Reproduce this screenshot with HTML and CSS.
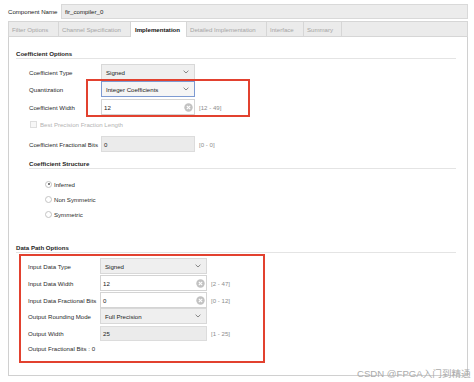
FILE: index.html
```html
<!DOCTYPE html>
<html>
<head>
<meta charset="utf-8">
<link rel="stylesheet" href="styles.css">
</head>
<body>
<div class="top">
  <span class="top-label">Component Name</span>
  <div class="top-input">fir_compiler_0</div>
</div>
<div class="tabs">
  <div class="tab w1">Filter Options</div>
  <div class="tab w2">Channel Specification</div>
  <div class="tab w3 active">Implementation</div>
  <div class="tab w4">Detailed Implementation</div>
  <div class="tab w5">Interface</div>
  <div class="tab w6">Summary</div>
</div>
<div class="panel">
  <div class="heading h-main">Coefficient Options</div>
  <div class="group g1">
    <div class="row r1">
      <span class="label">Coefficient Type</span>
      <div class="ctl select">Signed<svg class="chev" width="6" height="4" viewBox="0 0 6 4"><polyline points="0.6,0.7 3,3 5.4,0.7" fill="none" stroke="#7a7a7a" stroke-width="0.9"/></svg></div>
    </div>
    <div class="row r2">
      <span class="label">Quantization</span>
      <div class="ctl select focus">Integer Coefficients<svg class="chev" width="6" height="4" viewBox="0 0 6 4"><polyline points="0.6,0.7 3,3 5.4,0.7" fill="none" stroke="#7a7a7a" stroke-width="0.9"/></svg></div>
    </div>
    <div class="row r3">
      <span class="label">Coefficient Width</span>
      <div class="ctl input">12<svg class="clear" width="9" height="9" viewBox="0 0 9 9"><circle cx="4.5" cy="4.5" r="4.2" fill="#c2c2c2"/><path d="M2.8 2.8 L6.2 6.2 M6.2 2.8 L2.8 6.2" stroke="#fff" stroke-width="1.1"/></svg></div>
      <span class="range">[12 - 49]</span>
    </div>
    <div class="row small r4">
      <span class="checkbox"></span>
      <span class="check-label">Best Precision Fraction Length</span>
    </div>
    <div class="row r5">
      <span class="label">Coefficient Fractional Bits</span>
      <div class="ctl disabled">0</div>
      <span class="range">[0 - 0]</span>
    </div>
    <div class="heading h-sub">Coefficient Structure</div>
    <div class="row small radio-row first">
      <span class="radio on"></span><span class="radio-label">Inferred</span>
    </div>
    <div class="row small radio-row">
      <span class="radio"></span><span class="radio-label">Non Symmetric</span>
    </div>
    <div class="row small radio-row">
      <span class="radio"></span><span class="radio-label">Symmetric</span>
    </div>
  </div>
  <div class="heading h-data">Data Path Options</div>
  <div class="group g2">
    <div class="row d1">
      <span class="label">Input Data Type</span>
      <div class="ctl select">Signed<svg class="chev" width="6" height="4" viewBox="0 0 6 4"><polyline points="0.6,0.7 3,3 5.4,0.7" fill="none" stroke="#7a7a7a" stroke-width="0.9"/></svg></div>
    </div>
    <div class="row d2">
      <span class="label">Input Data Width</span>
      <div class="ctl input">12<svg class="clear" width="9" height="9" viewBox="0 0 9 9"><circle cx="4.5" cy="4.5" r="4.2" fill="#c2c2c2"/><path d="M2.8 2.8 L6.2 6.2 M6.2 2.8 L2.8 6.2" stroke="#fff" stroke-width="1.1"/></svg></div>
      <span class="range">[2 - 47]</span>
    </div>
    <div class="row d3">
      <span class="label">Input Data Fractional Bits</span>
      <div class="ctl input">0<svg class="clear" width="9" height="9" viewBox="0 0 9 9"><circle cx="4.5" cy="4.5" r="4.2" fill="#c2c2c2"/><path d="M2.8 2.8 L6.2 6.2 M6.2 2.8 L2.8 6.2" stroke="#fff" stroke-width="1.1"/></svg></div>
      <span class="range">[0 - 12]</span>
    </div>
    <div class="row d4">
      <span class="label">Output Rounding Mode</span>
      <div class="ctl select">Full Precision<svg class="chev" width="6" height="4" viewBox="0 0 6 4"><polyline points="0.6,0.7 3,3 5.4,0.7" fill="none" stroke="#7a7a7a" stroke-width="0.9"/></svg></div>
    </div>
    <div class="row d5">
      <span class="label">Output Width</span>
      <div class="ctl disabled">25</div>
      <span class="range">[1 - 25]</span>
    </div>
    <div class="row small d6">
      <span class="plain">Output Fractional Bits : 0</span>
    </div>
  </div>
  <div class="mark mark1"></div>
  <div class="mark mark2"></div>
</div>
<div class="watermark">CSDN @FPGA入门到精通</div>
</body>
</html>
```

FILE: styles.css
```css
html, body {
  margin: 0;
  padding: 0;
}
body {
  width: 474px;
  height: 382px;
  background: #fff;
  font-family: "Liberation Sans", Arial, sans-serif;
  font-size: 6.1px;
  color: #2b2b2b;
  position: relative;
  overflow: hidden;
}

.top {
  display: flex;
  align-items: center;
  height: 15px;
  margin: 4px 6px 0 8px;
}
.top-label {
  width: 53px;
  color: #222;
}
.top-input {
  flex: 1;
  height: 15px;
  box-sizing: border-box;
  border: 1px solid #d9d9d9;
  background: #ececec;
  padding-left: 3px;
  display: flex;
  align-items: center;
  color: #222;
}

.tabs {
  display: flex;
  margin: 2px 6px 0 8px;
  height: 16px;
  box-sizing: border-box;
  border: 1px solid #d6d6d6;
  background: #ebebeb;
}
.tab {
  box-sizing: border-box;
  border-right: 1px solid #d6d6d6;
  padding-left: 3px;
  display: flex;
  align-items: center;
  color: #a5a5a5;
  white-space: nowrap;
}
.w1 { width: 50px; }
.w2 { width: 72px; }
.w3 { width: 56px; padding-left: 4px; }
.w4 { width: 80px; }
.w5 { width: 37px; }
.w6 { width: 38px; }
.tab.active {
  background: #fff;
  color: #111;
  font-weight: bold;
  margin-bottom: -1px;
}

.panel {
  position: relative;
  margin: 0 6px 0 8px;
  padding-top: 12px;
  height: 326px;
  border: 1px solid #d0d0d0;
  border-top: none;
}

.heading {
  height: 9px;
  line-height: 9px;
  border-bottom: 1px solid #e4e4e4;
  font-weight: bold;
  color: #1e1e1e;
  white-space: nowrap;
}
.h-main { margin: 0 11px 0 7px; }
.h-sub { margin: 7px 11px 0 0; }
.h-data { margin: 24px 11px 0 7px; }

.g1 { padding-left: 20px; }
.g2 { padding-left: 19px; }

.row {
  display: flex;
  align-items: center;
  height: 16px;
  white-space: nowrap;
}
.row.small { height: 10px; }
.label {
  width: 72px;
  flex: none;
  color: #2b2b2b;
}
.ctl {
  box-sizing: border-box;
  height: 16px;
  display: flex;
  align-items: center;
  flex: none;
  color: #222;
}
.g1 .ctl { width: 94px; }
.g2 .ctl { width: 107px; }

.select {
  background: #efefef;
  border: 1px solid #d8d8d8;
  padding: 0 5px 0 4px;
  justify-content: space-between;
}
.select.focus {
  border-color: #7d9ad2;
  background: #f5f5f5;
}
.input {
  background: #fff;
  border: 1px solid #d4d4d4;
  padding: 0 1px 0 2px;
  justify-content: space-between;
}
.disabled {
  background: #ebebeb;
  border: 1px solid #dcdcdc;
  padding-left: 2px;
}
.range {
  margin-left: 4px;
  color: #8d8d8d;
}

.r1 { margin-top: 5px; }
.r2 { margin-top: 1px; }
.r3 { margin-top: 2px; }
.r4 { margin-top: 4px; }
.r5 { margin-top: 7px; }

.checkbox {
  width: 7px;
  height: 7px;
  box-sizing: border-box;
  border: 1px solid #dedede;
  background: #f7f7f7;
  margin-left: 1px;
}
.check-label {
  margin-left: 3px;
  color: #b3b3b3;
}

.radio-row { margin-top: 5px; padding-left: 16px; }
.radio-row.first { margin-top: 10px; }
.radio {
  width: 7px;
  height: 7px;
  box-sizing: border-box;
  border: 1px solid #c4c4c4;
  border-radius: 50%;
  background: #fff;
  display: flex;
  align-items: center;
  justify-content: center;
}
.radio.on::after {
  content: "";
  width: 2px;
  height: 2px;
  border-radius: 50%;
  background: #555;
}
.radio-label { margin-left: 2px; color: #2b2b2b; }

.d1 { margin-top: 5px; }
.d2 { margin-top: 1px; }
.d3 { margin-top: 1px; }
.d4 { margin-top: 0; }
.d5 { margin-top: 2px; height: 15px; }
.d5 .ctl { height: 15px; }
.d6 { margin-top: 2px; }
.plain { color: #2b2b2b; }

.mark {
  position: absolute;
  box-sizing: border-box;
  border: 2px solid #e2412f;
}
.mark1 { left: 77px; top: 42px; width: 164px; height: 38px; }
.mark2 { left: 10px; top: 217px; width: 246px; height: 109px; }

.watermark {
  position: absolute;
  left: 357px;
  top: 367px;
  font-family: "Liberation Sans", "Noto Sans CJK SC", sans-serif;
  font-size: 9.6px;
  color: #ababab;
  white-space: nowrap;
  line-height: 13px;
}
```
